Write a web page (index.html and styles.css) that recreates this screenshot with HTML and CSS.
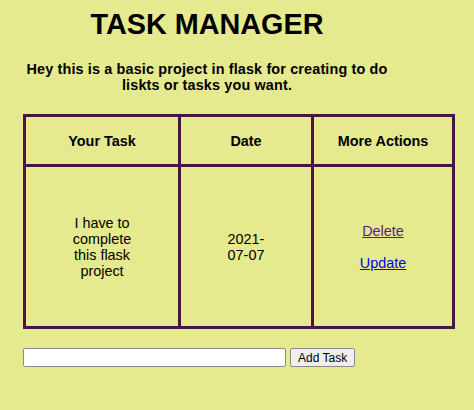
FILE: index.html
```html
<!DOCTYPE html>
<html>
<head>
<meta charset="utf-8">
<title>Task Manager</title>
<link rel="stylesheet" href="styles.css">
</head>
<body>
<div class="intro">
  <h1 class="title">TASK MANAGER</h1>
  <p class="lead">Hey this is a basic project in flask for creating to do liskts or tasks you want.</p>
</div>
<div class="main">
  <table class="tasks">
    <colgroup>
      <col class="c1">
      <col class="c2">
      <col class="c3">
    </colgroup>
    <thead>
      <tr class="head-row">
        <th>Your Task</th>
        <th>Date</th>
        <th>More Actions</th>
      </tr>
    </thead>
    <tbody>
      <tr class="body-row">
        <td>I have to complete this flask project</td>
        <td>2021-07-07</td>
        <td><a class="link visited" href="#">Delete</a><br><br><a class="link" href="#">Update</a></td>
      </tr>
    </tbody>
  </table>
  <form class="add-form">
    <input class="task-input" type="text"><button class="add-btn" type="button">Add Task</button>
  </form>
</div>
</body>
</html>
```

FILE: styles.css
```css
html, body {
  background: #e6ea8e;
}
body {
  margin: 0;
  padding: 8px 0 0 8px;
  font-family: "Liberation Sans", Arial, sans-serif;
  color: #000;
}
.intro {
  width: 378px;
  margin-left: 10px;
  text-align: center;
}
.title {
  margin: 0;
  font-size: 28.8px;
  font-weight: bold;
  line-height: normal;
}
.lead {
  margin: 20px 0 0;
  font-size: 14.4px;
  font-weight: bold;
  line-height: normal;
  letter-spacing: 0.15px;
}
.main {
  margin-left: 15px;
}
.tasks {
  margin-top: 21px;
  border-collapse: collapse;
  table-layout: fixed;
  width: 432px;
  font-size: 14.4px;
}
.c1 { width: 155px; }
.c2 { width: 133px; }
.c3 { width: 141px; }
.tasks th,
.tasks td {
  border: 3px solid #4a1446;
  text-align: center;
  vertical-align: middle;
}
.head-row th {
  height: 47px;
  padding: 0;
  font-weight: bold;
}
.body-row td {
  height: 159px;
  padding: 0 40px;
  line-height: normal;
}
.link {
  color: #0000ee;
}
.link.visited {
  color: #551a8b;
}
.add-form {
  margin-top: 19px;
  display: flex;
  align-items: center;
  gap: 4px;
}
.task-input {
  box-sizing: border-box;
  width: 263px;
  height: 19px;
  margin: 0;
  border: 1px solid #8a8a8a;
  border-radius: 2px;
  background: #fff;
}
.add-btn {
  box-sizing: border-box;
  height: 19px;
  margin: 0;
  padding: 0 7px;
  font-family: "Liberation Sans", Arial, sans-serif;
  font-size: 12px;
  color: #000;
  background: #efefef;
  border: 1px solid #8a8a8a;
  border-radius: 2px;
}
```
